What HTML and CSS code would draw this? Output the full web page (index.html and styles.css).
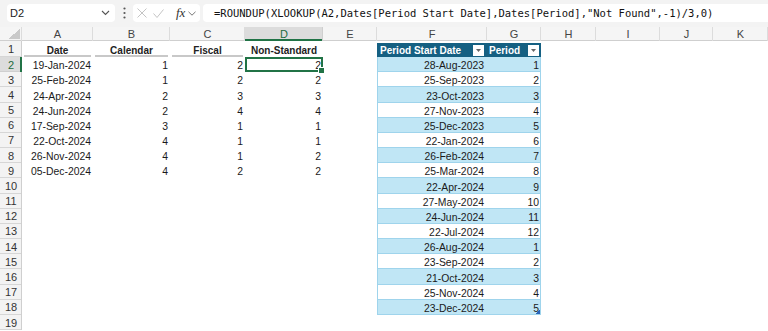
FILE: index.html
```html
<!DOCTYPE html>
<html lang="en">
<head>
    <meta charset="UTF-8">
    <meta name="viewport" content="width=device-width, initial-scale=1.0">
    <title>Period lookup</title>
    <link rel="stylesheet" href="styles.css">
</head>
<body>
    <!-- Formula bar -->
    <div class="formula-bar">
        <div class="name-box">
            <span>D2</span>
            <svg width="9" height="6" viewBox="0 0 9 6"><path d="M1 1l3.5 3.5L8 1" fill="none" stroke="#555" stroke-width="1.1"/></svg>
        </div>
        <div class="dots">
            <svg width="3" height="12" viewBox="0 0 3 12"><circle cx="1.5" cy="1.5" r="1.1"/><circle cx="1.5" cy="6" r="1.1"/><circle cx="1.5" cy="10.5" r="1.1"/></svg>
        </div>
        <div class="fx-box">
            <svg class="ico-x" width="10" height="10" viewBox="0 0 10 10"><path d="M0.5 0.5l9 9M9.5 0.5l-9 9" fill="none" stroke="#c4c4c4" stroke-width="1"/></svg>
            <svg class="ico-ok" width="11" height="9" viewBox="0 0 11 9"><path d="M0.5 4.5l3.5 4L10.5 0.5" fill="none" stroke="#c4c4c4" stroke-width="1"/></svg>
            <span class="fx">fx</span>
            <svg class="ico-down" width="8" height="5" viewBox="0 0 8 5"><path d="M0.5 0.8l3.5 3.4L7.5 0.8" fill="none" stroke="#777" stroke-width="1"/></svg>
        </div>
        <div class="formula">=ROUNDUP(XLOOKUP(A2,Dates[Period Start Date],Dates[Period],"Not Found",-1)/3,0)</div>
    </div>

    <!-- Sheet grid -->
    <table class="sheet">
        <colgroup>
            <col style="width:22px"><col style="width:71px"><col style="width:77px"><col style="width:75px">
            <col style="width:78px"><col style="width:54px"><col style="width:110px"><col style="width:54px">
            <col style="width:55px"><col style="width:64px"><col style="width:53px"><col style="width:55px">
        </colgroup>
        <thead>
            <tr>
                <th class="corner"></th>
                <th>A</th><th>B</th><th>C</th><th class="sel">D</th><th>E</th><th>F</th>
                <th>G</th><th>H</th><th>I</th><th>J</th><th>K</th>
            </tr>
        </thead>
        <tbody>
            <tr class="r1">
                <th class="rh">1</th>
                <td class="hd line">Date</td>
                <td class="hd line">Calendar</td>
                <td class="hd line">Fiscal</td>
                <td class="hd">Non-Standard</td>
                <td></td>
                <td class="tf t-head">
                    <div class="t-title">Period Start Date<span class="filter"><svg width="5" height="3" viewBox="0 0 5 3"><path d="M0 0h5L2.5 3z"/></svg></span></div>
                </td>
                <td class="tg t-head">
                    <div class="t-title">Period<span class="filter"><svg width="5" height="3" viewBox="0 0 5 3"><path d="M0 0h5L2.5 3z"/></svg></span></div>
                </td>
                <td colspan="4"></td>
            </tr>
            <tr class="band">
                <th class="rh sel">2</th>
                <td>19-Jan-2024</td><td>1</td><td>2</td><td class="active">2</td><td></td>
                <td class="tf">28-Aug-2023</td><td class="tg">1</td><td colspan="4"></td>
            </tr>
            <tr>
                <th class="rh">3</th>
                <td>25-Feb-2024</td><td>1</td><td>2</td><td>2</td><td></td>
                <td class="tf">25-Sep-2023</td><td class="tg">2</td><td colspan="4"></td>
            </tr>
            <tr class="band">
                <th class="rh">4</th>
                <td>24-Apr-2024</td><td>2</td><td>3</td><td>3</td><td></td>
                <td class="tf">23-Oct-2023</td><td class="tg">3</td><td colspan="4"></td>
            </tr>
            <tr>
                <th class="rh">5</th>
                <td>24-Jun-2024</td><td>2</td><td>4</td><td>4</td><td></td>
                <td class="tf">27-Nov-2023</td><td class="tg">4</td><td colspan="4"></td>
            </tr>
            <tr class="band">
                <th class="rh">6</th>
                <td>17-Sep-2024</td><td>3</td><td>1</td><td>1</td><td></td>
                <td class="tf">25-Dec-2023</td><td class="tg">5</td><td colspan="4"></td>
            </tr>
            <tr>
                <th class="rh">7</th>
                <td>22-Oct-2024</td><td>4</td><td>1</td><td>1</td><td></td>
                <td class="tf">22-Jan-2024</td><td class="tg">6</td><td colspan="4"></td>
            </tr>
            <tr class="band">
                <th class="rh">8</th>
                <td>26-Nov-2024</td><td>4</td><td>1</td><td>2</td><td></td>
                <td class="tf">26-Feb-2024</td><td class="tg">7</td><td colspan="4"></td>
            </tr>
            <tr>
                <th class="rh">9</th>
                <td>05-Dec-2024</td><td>4</td><td>2</td><td>2</td><td></td>
                <td class="tf">25-Mar-2024</td><td class="tg">8</td><td colspan="4"></td>
            </tr>
            <tr class="band">
                <th class="rh">10</th><td colspan="5"></td>
                <td class="tf">22-Apr-2024</td><td class="tg">9</td><td colspan="4"></td>
            </tr>
            <tr>
                <th class="rh">11</th><td colspan="5"></td>
                <td class="tf">27-May-2024</td><td class="tg">10</td><td colspan="4"></td>
            </tr>
            <tr class="band">
                <th class="rh">12</th><td colspan="5"></td>
                <td class="tf">24-Jun-2024</td><td class="tg">11</td><td colspan="4"></td>
            </tr>
            <tr>
                <th class="rh">13</th><td colspan="5"></td>
                <td class="tf">22-Jul-2024</td><td class="tg">12</td><td colspan="4"></td>
            </tr>
            <tr class="band">
                <th class="rh">14</th><td colspan="5"></td>
                <td class="tf">26-Aug-2024</td><td class="tg">1</td><td colspan="4"></td>
            </tr>
            <tr>
                <th class="rh">15</th><td colspan="5"></td>
                <td class="tf">23-Sep-2024</td><td class="tg">2</td><td colspan="4"></td>
            </tr>
            <tr class="band">
                <th class="rh">16</th><td colspan="5"></td>
                <td class="tf">21-Oct-2024</td><td class="tg">3</td><td colspan="4"></td>
            </tr>
            <tr>
                <th class="rh">17</th><td colspan="5"></td>
                <td class="tf">25-Nov-2024</td><td class="tg">4</td><td colspan="4"></td>
            </tr>
            <tr class="band">
                <th class="rh">18</th><td colspan="5"></td>
                <td class="tf">23-Dec-2024</td><td class="tg last">5</td><td colspan="4"></td>
            </tr>
            <tr>
                <th class="rh">19</th><td colspan="11"></td>
            </tr>
        </tbody>
    </table>
</body>
</html>
```

FILE: styles.css
```css
/* Basic Reset */
* {
    margin: 0;
    padding: 0;
    box-sizing: border-box;
}

body {
    font-family: 'Liberation Sans', Arial, sans-serif;
    background-color: #fff;
    color: #1a1a1a;
    width: 768px;
    height: 331px;
    overflow: hidden;
}

/* Formula bar */
.formula-bar {
    display: flex;
    align-items: center;
    height: 27px;
    padding: 0 0 1px 7px;
    background-color: #f3f3f3;
}

.name-box {
    display: flex;
    align-items: center;
    justify-content: space-between;
    width: 108px;
    height: 18px;
    padding: 0 5px 0 3px;
    background-color: #fff;
    border-radius: 4px;
    font-size: 11px;
    color: #222;
}

.dots {
    display: flex;
    justify-content: center;
    width: 18px;
    fill: #555;
}

.fx-box {
    display: flex;
    align-items: center;
    width: 67px;
    height: 18px;
    padding-left: 4px;
    background-color: #fff;
    border-radius: 4px;
}

.ico-ok {
    margin-left: 6px;
}

.fx {
    margin-left: 12px;
    font-family: 'Liberation Serif', 'Times New Roman', serif;
    font-style: italic;
    font-size: 13px;
    line-height: 18px;
    color: #333;
}

.ico-down {
    margin-left: 3px;
}

.formula {
    flex: 1;
    height: 18px;
    margin-left: 3px;
    padding-left: 11px;
    background-color: #fff;
    border-radius: 4px 0 0 4px;
    font-family: 'DejaVu Sans Mono', 'Liberation Mono', monospace;
    font-size: 10.5px;
    line-height: 18px;
    color: #111;
    white-space: nowrap;
}

/* Sheet grid */
.sheet {
    border-collapse: collapse;
    table-layout: fixed;
    width: 768px;
    font-size: 10.4px;
}

.sheet td,
.sheet th {
    padding: 0 2px;
    white-space: nowrap;
    overflow: hidden;
}

.sheet td {
    text-align: right;
    vertical-align: bottom;
    line-height: 13px;
}

tbody tr {
    height: 15.18px;
}

tr.r1 {
    height: 16px;
}

/* Column letters */
thead tr {
    height: 14px;
}

thead th {
    font-weight: normal;
    font-size: 11px;
    color: #444;
    background-color: #f5f5f5;
    box-shadow: inset -1px 0 #dcdcdc, inset 0 -1px #cfcfcf;
}

thead th.sel {
    background-color: #dcdcdc;
    color: #1d6b3c;
    box-shadow: inset -1px 0 #cfcfcf, inset 0 -2px #217346;
}

th.corner {
    background-image: linear-gradient(to bottom right, transparent 50%, #c9c9c9 50%);
    background-size: 12px 10px;
    background-position: right 2px bottom 2px;
    background-repeat: no-repeat;
}

/* Row numbers */
th.rh {
    font-weight: normal;
    font-size: 11px;
    color: #333;
    text-align: center;
    background-color: #f3f3f3;
    box-shadow: inset -1px 0 #cfcfcf, inset 0 -1px #d6d6d6;
}

th.rh.sel {
    background-color: #dcdcdc;
    color: #1d6b3c;
    box-shadow: inset -2px 0 #217346, inset 0 -1px #cfcfcf;
}

/* Column headings in row 1 */
td.hd {
    text-align: center;
    font-weight: bold;
    font-size: 10px;
    color: #222;
}

td.hd.line {
    background-image: linear-gradient(#c8c8c8, #c8c8c8);
    background-size: calc(100% - 4px) 2px;
    background-position: center bottom;
    background-repeat: no-repeat;
}

/* Active cell */
td.active {
    position: relative;
    overflow: visible;
    box-shadow: inset 0 0 0 2px #217346;
}

td.active::after {
    content: '';
    position: absolute;
    right: -2px;
    bottom: -2px;
    width: 5px;
    height: 5px;
    background-color: #217346;
    border: 1px solid #fff;
}

/* Dates table */
td.tf {
    box-shadow: inset 1px 0 #9fd4ec, inset 0 -1px #9fd4ec;
    padding-right: 3px;
}

td.tg {
    box-shadow: inset -1px 0 #9fd4ec, inset 0 -1px #9fd4ec;
}

tr.band td.tf,
tr.band td.tg {
    background-color: #c0e6f5;
}

td.tg.last {
    background-image: linear-gradient(135deg, transparent 50%, #2a64b8 50%);
    background-size: 4px 4px;
    background-position: right 1px bottom 1px;
    background-repeat: no-repeat;
}

td.t-head {
    padding-top: 1px;
    vertical-align: bottom;
    box-shadow: inset 0 1px #fff;
}

.t-title {
    display: flex;
    align-items: center;
    justify-content: space-between;
    height: 14px;
    background-color: #156082;
    color: #fff;
    font-weight: bold;
    font-size: 10px;
    text-align: left;
}

td.tf .t-title {
    margin: 0 -3px 0 -2px;
    padding: 0 3px;
}

td.tg .t-title {
    margin: 0 -2px;
    padding: 0 2px;
}

.filter {
    display: flex;
    align-items: center;
    justify-content: center;
    width: 11px;
    height: 11px;
    background-color: #fff;
    fill: #666;
}
```
